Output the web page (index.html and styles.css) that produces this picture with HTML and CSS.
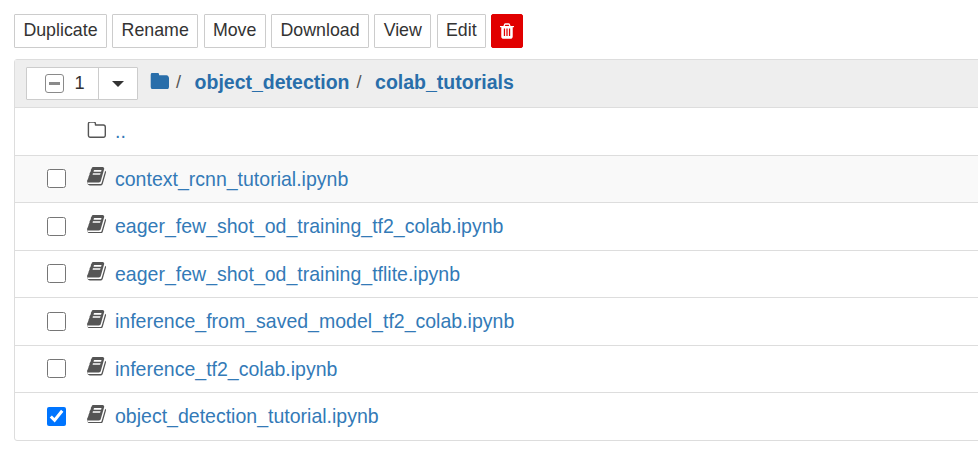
FILE: index.html
```html
<!DOCTYPE html>
<html lang="en">
<head>
<meta charset="utf-8">
<title>colab_tutorials</title>
<link rel="stylesheet" href="styles.css">
</head>
<body>
<div class="toolbar">
  <button class="btn">Duplicate</button>
  <button class="btn">Rename</button>
  <button class="btn">Move</button>
  <button class="btn">Download</button>
  <button class="btn">View</button>
  <button class="btn">Edit</button>
  <button class="btn btn-danger" aria-label="Delete"><svg class="ico-trash" viewBox="0 0 1408 1792"><path d="M512 1376v-704q0-14-9-23t-23-9h-64q-14 0-23 9t-9 23v704q0 14 9 23t23 9h64q14 0 23-9t9-23zm256 0v-704q0-14-9-23t-23-9h-64q-14 0-23 9t-9 23v704q0 14 9 23t23 9h64q14 0 23-9t9-23zm256 0v-704q0-14-9-23t-23-9h-64q-14 0-23 9t-9 23v704q0 14 9 23t23 9h64q14 0 23-9t9-23zm-544-992h448l-48-117q-7-9-17-11h-317q-10 2-17 11zm928 32v64q0 14-9 23t-23 9h-96v948q0 83-47 143.5t-113 60.5h-832q-66 0-113-58.5t-47-141.5v-952h-96q-14 0-23-9t-9-23v-64q0-14 9-23t23-9h309l70-167q15-37 54-63t79-26h320q40 0 79 26t54 63l70 167h309q14 0 23 9t9 23z"/></svg></button>
</div>
<div class="panel">
  <div class="panel-head">
    <div class="select-group">
      <div class="select-count"><span class="minus-box"><span class="minus-dash"></span></span><span class="count">1</span></div>
      <div class="select-caret"><span class="caret"></span></div>
    </div>
    <nav class="crumbs">
      <svg class="ico-folder-fill" viewBox="0 192 1728 1344" preserveAspectRatio="none"><path d="M1728 608v704q0 92-66 158t-158 66h-1216q-92 0-158-66t-66-158v-960q0-92 66-158t158-66h320q92 0 158 66t66 158v32h672q92 0 158 66t66 158z"/></svg>
      <span class="sep">/</span>
      <a class="crumb">object_detection</a>
      <span class="sep">/</span>
      <a class="crumb">colab_tutorials</a>
    </nav>
  </div>
  <div class="row">
    <span class="cell-check"></span>
    <svg class="ico-folder" viewBox="0 192 1728 1344" preserveAspectRatio="none"><path d="M1600 1312v-704q0-40-28-68t-68-28h-704q-40 0-68-28t-28-68v-64q0-40-28-68t-68-28h-320q-40 0-68 28t-28 68v960q0 40 28 68t68 28h1216q40 0 68-28t28-68zm128-704v704q0 92-66 158t-158 66h-1216q-92 0-158-66t-66-158v-960q0-92 66-158t158-66h320q92 0 158 66t66 158v32h672q92 0 158 66t66 158z"/></svg>
    <a class="item">..</a>
  </div>
  <div class="row row-alt">
    <span class="cell-check"><input type="checkbox" class="check"></span>
    <svg class="ico-book" viewBox="64 128 1664 1536" preserveAspectRatio="none"><use href="#book"/></svg>
    <a class="item">context_rcnn_tutorial.ipynb</a>
  </div>
  <div class="row">
    <span class="cell-check"><input type="checkbox" class="check"></span>
    <svg class="ico-book" viewBox="64 128 1664 1536" preserveAspectRatio="none"><use href="#book"/></svg>
    <a class="item">eager_few_shot_od_training_tf2_colab.ipynb</a>
  </div>
  <div class="row">
    <span class="cell-check"><input type="checkbox" class="check"></span>
    <svg class="ico-book" viewBox="64 128 1664 1536" preserveAspectRatio="none"><use href="#book"/></svg>
    <a class="item">eager_few_shot_od_training_tflite.ipynb</a>
  </div>
  <div class="row">
    <span class="cell-check"><input type="checkbox" class="check"></span>
    <svg class="ico-book" viewBox="64 128 1664 1536" preserveAspectRatio="none"><use href="#book"/></svg>
    <a class="item">inference_from_saved_model_tf2_colab.ipynb</a>
  </div>
  <div class="row">
    <span class="cell-check"><input type="checkbox" class="check"></span>
    <svg class="ico-book" viewBox="64 128 1664 1536" preserveAspectRatio="none"><use href="#book"/></svg>
    <a class="item">inference_tf2_colab.ipynb</a>
  </div>
  <div class="row row-last">
    <span class="cell-check"><input type="checkbox" class="check" checked></span>
    <svg class="ico-book" viewBox="64 128 1664 1536" preserveAspectRatio="none"><use href="#book"/></svg>
    <a class="item">object_detection_tutorial.ipynb</a>
  </div>
</div>
<svg class="defs" aria-hidden="true"><defs><path id="book" d="M1703 478q40 57 18 129l-275 906q-19 64-76.5 107.5t-122.5 43.5h-923q-77 0-148.5-53.5t-99.5-131.5q-24-67-2-127 0-4 3-27t4-37q1-8-3-21.5t-3-19.5q2-11 8-21t16.5-23.5 16.5-23.5q23-38 45-91.5t30-91.5q3-10 .5-30t-.5-28q3-11 17-28t17-23q21-36 42-92t25-90q1-9-2.5-32t.5-28q4-13 22-30.5t22-22.5q19-26 42.5-84.5t27.5-96.5q1-8-3-25.5t-2-26.5q2-8 9-18t18-23 17-21q8-12 16.5-30.5t15-35 16-36 19.5-32 26.5-23.5 36-11.5 47.5 5.5l-1 3q38-9 51-9h761q74 0 114 56t18 130l-274 906q-36 119-71.5 153.5t-128.5 34.5h-1069q-27 0-38 15-11 16-1 43 24 70 144 70h1123q29 0 56-15.5t35-41.5l300-987q7-22 5-57 38 15 59 43zm-1064 2q-4 13 2 22.5t20 9.5h608q13 0 25.5-9.5t16.5-22.5l21-64q4-13-2-22.5t-20-9.5h-608q-13 0-25.5 9.5t-16.5 22.5zm-83 256q-4 13 2 22.5t20 9.5h608q13 0 25.5-9.5t16.5-22.5l21-64q4-13-2-22.5t-20-9.5h-608q-13 0-25.5 9.5t-16.5 22.5z"/></defs></svg>
</body>
</html>
```
FILE: styles.css
```css
html, body {
  margin: 0;
  padding: 0;
  background: #fff;
  overflow: hidden;
}
body {
  width: 978px;
  height: 460px;
  padding: 14px 0 0 14px;
  box-sizing: border-box;
  font-family: "Liberation Sans", Arial, sans-serif;
  font-size: 18.2px;
  color: #333;
}
.toolbar {
  display: flex;
  gap: 5.3px;
}
.btn {
  height: 33.6px;
  padding: 0 8.4px;
  border: 1px solid #ccc;
  border-radius: 1px;
  background: #fff;
  color: #333;
  font: inherit;
  font-size: 17.8px;
  line-height: 1;
}
.btn-danger {
  display: flex;
  align-items: center;
  justify-content: center;
  width: 32px;
  padding: 0;
  border-color: #e10000;
  background: #e10000;
  border-radius: 2px;
}
.ico-trash {
  width: 14px;
  height: 18px;
  fill: #fff;
}
.panel {
  width: 1000px;
  margin-top: 11.4px;
  border: 1px solid #ddd;
  border-radius: 3px;
  box-sizing: border-box;
}
.panel-head {
  display: flex;
  align-items: center;
  height: 48.5px;
  padding-left: 11px;
  background: #eee;
  border-bottom: 1px solid #ddd;
  box-sizing: border-box;
}
.select-group {
  display: flex;
  height: 33.5px;
  background: #fff;
  border: 1px solid #ccc;
  border-radius: 1px;
  box-sizing: border-box;
}
.select-count {
  display: flex;
  align-items: center;
  width: 72px;
  padding-left: 18px;
  box-sizing: border-box;
  border-right: 1px solid #ccc;
}
.minus-box {
  display: flex;
  align-items: center;
  justify-content: center;
  width: 19px;
  height: 19px;
  box-sizing: border-box;
  border: 1px solid #8a8a8a;
  border-radius: 3px;
  background: #fff;
}
.minus-dash {
  width: 11px;
  height: 3px;
  background: #8a8a8a;
}
.count {
  margin-left: 10.5px;
  color: #333;
}
.select-caret {
  display: flex;
  align-items: center;
  justify-content: center;
  width: 38px;
}
.caret {
  width: 0;
  height: 0;
  border-top: 6px solid #333;
  border-left: 6px solid transparent;
  border-right: 6px solid transparent;
}
.crumbs {
  display: flex;
  align-items: center;
  margin-left: 12px;
  margin-top: -3px;
  font-size: 19.5px;
}
.ico-folder-fill {
  width: 19px;
  height: 16.5px;
  margin-top: -2px;
  fill: #296eaa;
}
.sep {
  margin: 0 13.5px 0 7px;
  color: #555;
  font-size: 18.2px;
}
.crumb {
  color: #296eaa;
  font-weight: bold;
}
.row {
  display: flex;
  align-items: center;
  height: 47.5px;
  box-sizing: border-box;
  border-bottom: 1px solid #ddd;
  font-size: 19.52px;
}
.row-last {
  height: 46.5px;
  border-bottom: 0;
}
.row-alt {
  background: #f9f9f9;
}
.cell-check {
  display: flex;
  align-items: center;
  width: 72px;
  padding-left: 32px;
  box-sizing: border-box;
}
.check {
  width: 19px;
  height: 19px;
  margin: -1px 0 0;
  accent-color: #0075ff;
}
.ico-book, .ico-folder {
  width: 19px;
  margin-right: 9px;
  fill: #555;
}
.ico-folder {
  height: 16px;
  margin-top: -3px;
}
.ico-book {
  height: 18.5px;
  margin-top: -5px;
}
.item {
  color: #337ab7;
}
.defs {
  position: absolute;
  width: 0;
  height: 0;
}
```
